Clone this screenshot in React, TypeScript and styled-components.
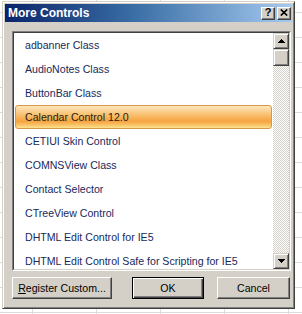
import React from "react";
import styled, { createGlobalStyle } from "styled-components";

const Global = createGlobalStyle`
  html, body { margin: 0; padding: 0; }
  body {
    width: 302px;
    height: 314px;
    overflow: hidden;
    background-color: #ffffff;
    background-image:
      linear-gradient(to right, transparent 32px, #dcdcdc 32px, #dcdcdc 33px, transparent 33px),
      linear-gradient(to bottom, transparent 12px, #dcdcdc 12px, #dcdcdc 13px, transparent 13px);
    background-size: 64px 100%, 100% 25px;
    font-family: "Liberation Sans", Arial, sans-serif;
  }
`;

const Dialog = styled.div`
  box-sizing: border-box;
  margin: 1px 0 0 2px;
  width: 293px;
  height: 308px;
  background: #d4d0c8;
  border: 1px solid;
  border-color: #d4d0c8 #404040 #404040 #d4d0c8;
  box-shadow: inset 1px 1px #ffffff, inset -1px -1px #808080;
  padding: 2px;
  display: flex;
  flex-direction: column;
`;

const TitleBar = styled.div`
  height: 18px;
  flex: none;
  display: flex;
  align-items: center;
  padding: 0 1px 0 3px;
  background: linear-gradient(to right, #0a246a 0%, #3a6ea5 45%, #a6caf0 100%);
  color: #ffffff;
  font-weight: bold;
  font-size: 12px;
`;

const Title = styled.span`
  flex: 1;
  white-space: nowrap;
`;

const CaptionButtons = styled.div`
  display: flex;
  gap: 2px;
`;

const CaptionButton = styled.div`
  box-sizing: border-box;
  width: 14px;
  height: 13px;
  background: #d4d0c8;
  border: 1px solid;
  border-color: #ffffff #404040 #404040 #ffffff;
  box-shadow: inset -1px -1px #808080;
  display: flex;
  align-items: center;
  justify-content: center;
  color: #000;
  font-size: 11px;
  font-weight: bold;
  line-height: 1;
  padding-bottom: 1px;
`;

const Body = styled.div`
  flex: 1;
  display: flex;
  flex-direction: column;
  padding: 9px 1px 0 7px;
`;

const ListFrame = styled.div`
  box-sizing: border-box;
  height: 240px;
  border: 1px solid;
  border-color: #808080 #ffffff #ffffff #808080;
  display: flex;
`;

const ListInner = styled.div`
  flex: 1;
  display: flex;
  border: 1px solid;
  border-color: #404040 #d4d0c8 #d4d0c8 #404040;
  background: #ffffff;
  overflow: hidden;
`;

const Items = styled.div`
  flex: 1;
  overflow: hidden;
  display: flex;
  flex-direction: column;
`;

const Item = styled.div<{ $selected?: boolean }>`
  box-sizing: border-box;
  flex: none;
  height: 24px;
  margin: 0 1px;
  padding-left: 9px;
  display: flex;
  align-items: center;
  border: 1px solid ${(p) => (p.$selected ? "#d49a4c" : "transparent")};
  border-radius: 3px;
  font-size: 10.6px;
  white-space: nowrap;
  color: ${(p) => (p.$selected ? "#2a1c10" : "#17295c")};
  background: ${(p) =>
    p.$selected
      ? "linear-gradient(to bottom, #fde6bc 0%, #fbcf8e 25%, #f8b55c 50%, #f6a443 70%, #f9c064 85%, #fde38f 100%)"
      : "transparent"};
`;

const ScrollBar = styled.div`
  width: 16px;
  flex: none;
  display: flex;
  flex-direction: column;
  background: repeating-conic-gradient(#ffffff 0 25%, #d4d0c8 0 50%) 0 0 / 2px 2px;
`;

const ScrollPart = styled.div<{ $h: number }>`
  box-sizing: border-box;
  height: ${(p) => p.$h}px;
  flex: none;
  background: #d4d0c8;
  border: 1px solid;
  border-color: #d4d0c8 #404040 #404040 #d4d0c8;
  box-shadow: inset 1px 1px #ffffff, inset -1px -1px #808080;
  display: flex;
  align-items: center;
  justify-content: center;
`;

const Track = styled.div`
  flex: 1;
`;

const ButtonRow = styled.div`
  display: flex;
  margin-top: 6px;
`;

const Button = styled.div<{ $w: number; $ml?: number; $default?: boolean }>`
  box-sizing: border-box;
  width: ${(p) => p.$w}px;
  margin-left: ${(p) => p.$ml ?? 0}px;
  height: 22px;
  background: #d4d0c8;
  display: flex;
  align-items: center;
  justify-content: center;
  font-size: 10.6px;
  color: #000;
  white-space: nowrap;
  border: 1px solid;
  border-color: ${(p) => (p.$default ? "#000000" : "#ffffff #404040 #404040 #ffffff")};
  box-shadow: ${(p) =>
    p.$default
      ? "inset 1px 1px #ffffff, inset -1px -1px #404040, inset -2px -2px #808080"
      : "inset -1px -1px #808080"};
`;

const Underline = styled.span`
  text-decoration: underline;
`;

const Arrow = ({ up }: { up?: boolean }) => (
  <svg width="7" height="4" viewBox="0 0 7 4" shapeRendering="crispEdges">
    <polygon points={up ? "3.5,0 7,4 0,4" : "0,0 7,0 3.5,4"} fill="#000" />
  </svg>
);

const CloseGlyph = () => (
  <svg width="8" height="7" viewBox="0 0 8 7">
    <path d="M0.8 0.5 L7.2 6.5 M7.2 0.5 L0.8 6.5" stroke="#000" strokeWidth="1.7" />
  </svg>
);

const items = [
  "adbanner Class",
  "AudioNotes Class",
  "ButtonBar Class",
  "Calendar Control 12.0",
  "CETIUI Skin Control",
  "COMNSView Class",
  "Contact Selector",
  "CTreeView Control",
  "DHTML Edit Control for IE5",
  "DHTML Edit Control Safe for Scripting for IE5",
];

export default function App() {
  return (
    <>
      <Global />
      <Dialog>
        <TitleBar>
          <Title>More Controls</Title>
          <CaptionButtons>
            <CaptionButton>?</CaptionButton>
            <CaptionButton>
              <CloseGlyph />
            </CaptionButton>
          </CaptionButtons>
        </TitleBar>
        <Body>
          <ListFrame>
            <ListInner>
              <Items>
                {items.map((t) => (
                  <Item key={t} $selected={t === "Calendar Control 12.0"}>
                    {t}
                  </Item>
                ))}
              </Items>
              <ScrollBar>
                <ScrollPart $h={16}>
                  <Arrow up />
                </ScrollPart>
                <ScrollPart $h={17} />
                <Track />
                <ScrollPart $h={16}>
                  <Arrow />
                </ScrollPart>
              </ScrollBar>
            </ListInner>
          </ListFrame>
          <ButtonRow>
            <Button $w={100}>
              <Underline>R</Underline>egister Custom...
            </Button>
            <Button $w={72} $ml={20} $default>
              OK
            </Button>
            <Button $w={73} $ml={13}>
              Cancel
            </Button>
          </ButtonRow>
        </Body>
      </Dialog>
    </>
  );
}
